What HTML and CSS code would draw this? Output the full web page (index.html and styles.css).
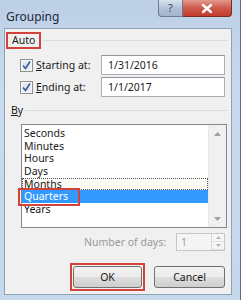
FILE: index.html
```html
<!DOCTYPE html>
<html lang="en">
<head>
  <meta charset="UTF-8" />
  <title>Grouping</title>
  <link rel="stylesheet" href="styles.css">
</head>
<body>
  <div class="window">
    <div class="titlebar">
      <span class="title">Grouping</span>
      <div class="caption-btns">
        <div class="btn-help">?</div>
        <div class="btn-close">
          <svg width="14" height="11" viewBox="0 0 14 11">
            <path d="M3 2 L11 9 M11 2 L3 9" stroke="#fff" stroke-width="2.4" stroke-linecap="round" />
          </svg>
        </div>
      </div>
    </div>

    <div class="client">
      <div class="group-head">
        <span class="mark">Auto</span>
        <span class="rule"></span>
      </div>

      <div class="field-row first">
        <label class="check">
          <svg class="box" width="13" height="13" viewBox="0 0 13 13">
            <rect x="0.5" y="0.5" width="12" height="12" fill="#f4f6fa" stroke="#8f8f8f" />
            <rect x="2.5" y="2.5" width="8" height="8" fill="#dfe6f0" />
            <path d="M3 6.5 L5.5 9.5 L10 2.5" fill="none" stroke="#3d5a9a" stroke-width="1.6" />
          </svg>
          <span><u>S</u>tarting at:</span>
        </label>
        <div class="textbox">1/31/2016</div>
      </div>

      <div class="field-row">
        <label class="check">
          <svg class="box" width="13" height="13" viewBox="0 0 13 13">
            <rect x="0.5" y="0.5" width="12" height="12" fill="#f4f6fa" stroke="#8f8f8f" />
            <rect x="2.5" y="2.5" width="8" height="8" fill="#dfe6f0" />
            <path d="M3 6.5 L5.5 9.5 L10 2.5" fill="none" stroke="#3d5a9a" stroke-width="1.6" />
          </svg>
          <span><u>E</u>nding at:</span>
        </label>
        <div class="textbox">1/1/2017</div>
      </div>

      <div class="group-head by">
        <span><u>B</u>y</span>
        <span class="rule"></span>
      </div>

      <div class="listbox">
        <ul class="items">
          <li>Seconds</li>
          <li>Minutes</li>
          <li>Hours</li>
          <li>Days</li>
          <li class="focus">Months</li>
          <li class="selected"><span class="marked">Quarters</span></li>
          <li>Years</li>
        </ul>
        <div class="scrollbar">
          <svg width="7" height="4" viewBox="0 0 7 4"><path d="M0 4 L3.5 0 L7 4 Z" fill="#a0a0a0" /></svg>
          <svg width="7" height="4" viewBox="0 0 7 4"><path d="M0 0 L3.5 4 L7 0 Z" fill="#a0a0a0" /></svg>
        </div>
      </div>

      <div class="days-row">
        <span class="days-label">Number of days:</span>
        <div class="spin">
          <span class="spin-value">1</span>
          <div class="spin-btns">
            <div class="spin-btn"><svg width="5" height="3" viewBox="0 0 5 3"><path d="M0 3 L2.5 0 L5 3 Z" fill="#b5b5b5" /></svg></div>
            <div class="spin-btn"><svg width="5" height="3" viewBox="0 0 5 3"><path d="M0 0 L2.5 3 L5 0 Z" fill="#b5b5b5" /></svg></div>
          </div>
        </div>
      </div>

      <div class="buttons">
        <div class="ok-mark"><button class="btn">OK</button></div>
        <button class="btn cancel">Cancel</button>
      </div>
    </div>
  </div>
</body>
</html>
```

FILE: styles.css
```css
html, body {
  margin: 0;
  padding: 0;
}

body {
  width: 241px;
  height: 300px;
  overflow: hidden;
  font-family: 'Noto Sans', 'Open Sans', sans-serif;
  font-size: 10.5px;
  color: #1a1a1a;
}

.window {
  height: 300px;
  box-sizing: border-box;
  display: flex;
  flex-direction: column;
  background: linear-gradient(to bottom, #bccfe6, #c9daee 30%, #c6d8ec);
  border-right: 1px solid #5d6f86;
}

.titlebar {
  height: 28px;
  display: flex;
  justify-content: space-between;
  align-items: flex-start;
  flex-shrink: 0;
}

.title {
  padding: 8px 0 0 6px;
  font-size: 12px;
  color: #1e2838;
}

.caption-btns {
  display: flex;
  margin-right: 8px;
}

.btn-help {
  width: 25px;
  height: 17px;
  box-sizing: border-box;
  border: 1px solid #6c7d92;
  border-top: none;
  border-radius: 0 0 0 4px;
  background: linear-gradient(to bottom, #d8e3ef, #b2c3d7 50%, #a3b6cc);
  color: #3b4656;
  font-size: 11px;
  text-align: center;
  line-height: 15px;
}

.btn-close {
  width: 49px;
  height: 17px;
  box-sizing: border-box;
  border: 1px solid #7a2c24;
  border-top: none;
  border-left: none;
  border-radius: 0 0 4px 0;
  background: linear-gradient(to bottom, #e3998e, #cd5a4c 50%, #c23b2d);
  display: flex;
  align-items: center;
  justify-content: center;
}

.client {
  flex: 1;
  margin: 0 8px 5px 4px;
  background: #f0f0f0;
  border: 1px solid #8fa2b8;
  display: flex;
  flex-direction: column;
}

.group-head {
  display: flex;
  align-items: center;
  height: 17px;
  margin: 3px 3px 0 1px;
}

.group-head .rule {
  flex: 1;
  height: 0;
  border-top: 1px solid #d5dce4;
  margin-left: 2px;
}

.mark {
  height: 17px;
  box-sizing: border-box;
  border: 2px solid #d2433c;
  padding: 0 4px;
  line-height: 13px;
}

.group-head.by {
  height: 14px;
  margin: 6px 3px 0 6px;
}

.field-row {
  display: grid;
  grid-template-columns: 96px 124px;
  align-items: center;
  height: 20px;
  margin-top: 2px;
}

.field-row.first {
  margin-top: 6px;
}

.check {
  display: flex;
  align-items: center;
  gap: 3px;
  padding-left: 15px;
}

.textbox {
  height: 20px;
  box-sizing: border-box;
  border: 1px solid #abadb3;
  border-top-color: #8f959e;
  background: #fff;
  padding: 0 6px;
  line-height: 18px;
}

.listbox {
  display: flex;
  width: 206px;
  height: 104px;
  box-sizing: border-box;
  margin: 7px 0 0 16px;
  border: 1px solid #828790;
  background: #fff;
}

.items {
  list-style: none;
  margin: 0;
  padding: 2px 0 0;
  flex: 1;
}

.items li {
  height: 12.7px;
  line-height: 12.7px;
  padding-left: 2px;
}

.items li.focus {
  outline: 1px dotted #555;
  outline-offset: -1px;
  background: #fbfaf4;
}

.items li.selected {
  background: #3399ff;
  color: #fff;
}

.marked {
  position: relative;
}

.marked::after {
  content: "";
  position: absolute;
  left: -6px;
  right: -12px;
  top: -1px;
  bottom: -3px;
  border: 2px solid #d2433c;
}

.scrollbar {
  width: 17px;
  background: #f0f0f0;
  border-left: 1px solid #e6e6e6;
  display: flex;
  flex-direction: column;
  justify-content: space-between;
  align-items: center;
  padding: 7px 0 6px;
}

.days-row {
  display: flex;
  justify-content: flex-end;
  align-items: center;
  gap: 10px;
  margin: 5px 6px 0 0;
  height: 18px;
}

.days-label {
  color: #9a9a9a;
}

.spin {
  display: flex;
  width: 49px;
  height: 18px;
  box-sizing: border-box;
  border: 1px solid #c4c6ca;
  background: #f4f4f4;
}

.spin-value {
  flex: 1;
  padding-left: 4px;
  color: #a0a0a0;
  line-height: 16px;
}

.spin-btns {
  width: 12px;
  display: flex;
  flex-direction: column;
  border-left: 1px solid #d8d8d8;
}

.spin-btn {
  flex: 1;
  display: flex;
  align-items: center;
  justify-content: center;
  background: #f6f6f6;
  border-bottom: 1px solid #e0e0e0;
}

.buttons {
  display: flex;
  justify-content: flex-end;
  align-items: center;
  gap: 9px;
  margin: 12px 6px 0 0;
}

.ok-mark {
  border: 2px solid #d2433c;
  padding: 1px;
}

.btn {
  font-family: inherit;
  font-size: 10.5px;
  color: #1a1a1a;
  height: 22px;
  width: 69px;
  border: 1px solid #707070;
  border-radius: 3px;
  background: linear-gradient(to bottom, #f2f2f2, #ebebeb 50%, #dddddd 51%, #cfcfcf);
  padding: 0;
}

.btn.cancel {
  width: 71px;
}
```
